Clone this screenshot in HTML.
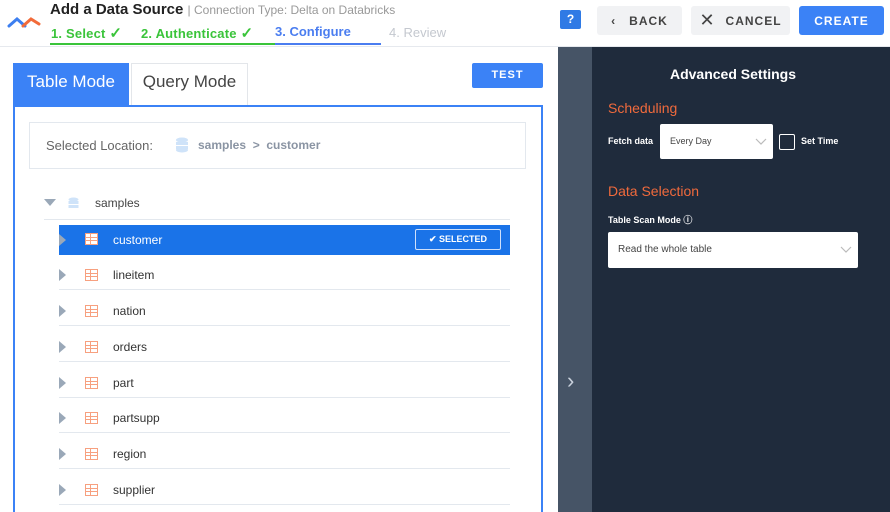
<!DOCTYPE html>
<html><head><style>
*{box-sizing:border-box;margin:0;padding:0}
html,body{width:890px;height:512px;overflow:hidden}
body{background:#fff;font-family:"Liberation Sans",sans-serif;position:relative}
.a{position:absolute}
.btn{position:absolute;top:6px;height:29px;border-radius:3px;font-size:12px;font-weight:bold;letter-spacing:1px;display:flex;align-items:center;justify-content:center}
.row{position:absolute;left:59px;width:451px;height:29px;border-bottom:1px solid #e3e8ee;font-size:12px;color:#333}
.row .tri{position:absolute;left:0;top:8px;width:0;height:0;border-top:6px solid transparent;border-bottom:6px solid transparent;border-left:7px solid #9aa8b8}
.row .ic{position:absolute;left:26px;top:8px;width:13px;height:12px;border:1.5px solid #f7a07f;background:
linear-gradient(#f7a07f,#f7a07f) 0 3px/100% 1px no-repeat,linear-gradient(#f7a07f,#f7a07f) 0 6px/100% 1px no-repeat,linear-gradient(#f7a07f,#f7a07f) 4px 0/1px 100% no-repeat}
.row .t{position:absolute;left:54px;top:7px}
.chev{position:absolute;right:6px;top:50%;margin-top:-4px}
</style></head><body>
<svg class="a" style="left:7px;top:14px" width="34" height="18"><path d="M2 12 L10 5 L18 12" stroke="#3d7ff0" stroke-width="3" fill="none" stroke-linecap="round"/><path d="M16 12 L24 5 L32 10" stroke="#f26b3a" stroke-width="3" fill="none" stroke-linecap="round"/></svg>
<div class="a" style="left:50px;top:1px;font-size:15px;font-weight:bold;color:#222">Add a Data Source <span style="font-weight:normal;font-size:12px;color:#999">| Connection Type: Delta on Databricks</span></div>
<div class="a" style="left:51px;top:24px;font-size:13px;color:#3ac43a;font-weight:bold;letter-spacing:.2px">1. Select <span style="font-size:15px">✓</span></div>
<div class="a" style="left:141px;top:24px;font-size:13px;color:#3ac43a;font-weight:bold;letter-spacing:.2px">2. Authenticate <span style="font-size:15px">✓</span></div>
<div class="a" style="left:275px;top:24px;font-size:13px;color:#4a7df0;font-weight:bold">3. Configure</div>
<div class="a" style="left:389px;top:25px;font-size:13px;color:#c4c8cf">4. Review</div>
<div class="a" style="left:50px;top:43px;width:225px;height:2px;background:#3ac43a"></div>
<div class="a" style="left:275px;top:43px;width:106px;height:2px;background:#4a7df0"></div>
<div class="a" style="left:0;top:46px;width:890px;height:1px;background:#e6e9ee"></div>
<div class="a" style="left:560px;top:10px;width:21px;height:19px;background:#2f7ae5;border-radius:2px;color:#fff;font-size:12px;font-weight:bold;text-align:center;line-height:19px">?</div>
<div class="btn" style="left:597px;width:85px;background:#f1f2f4;color:#444">‹&nbsp;&nbsp; BACK</div>
<div class="btn" style="left:691px;width:99px;background:#f1f2f4;color:#444"><span style="font-size:18px;font-weight:normal;margin-right:10px">✕</span>CANCEL</div>
<div class="btn" style="left:799px;width:85px;background:#3b82f6;color:#fff">CREATE</div>
<div class="a" style="left:13px;top:63px;width:116px;height:43px;background:#3b82f6;color:#fff;font-size:17px;line-height:38px;text-align:center">Table Mode</div>
<div class="a" style="left:131px;top:63px;width:117px;height:43px;border:1px solid #e3e6ea;border-bottom:none;color:#444;font-size:17px;line-height:36px;text-align:center">Query Mode</div>
<div class="a" style="left:472px;top:63px;width:71px;height:25px;background:#3b82f6;color:#fff;border-radius:2px;font-size:11px;font-weight:bold;letter-spacing:1px;text-align:center;line-height:25px">TEST</div>
<div class="a" style="left:13px;top:105px;width:530px;height:407px;border:2px solid #3b82f6;border-bottom:none"></div>
<div class="a" style="left:29px;top:122px;width:497px;height:47px;border:1px solid #e3e8ee;font-size:13px;color:#666">
<span class="a" style="left:16px;top:15px">Selected Location:</span>
<svg class="a" style="left:145px;top:14px" width="14" height="16"><ellipse cx="7" cy="3" rx="6" ry="2.5" fill="#cfe3f9"/><rect x="1" y="5" width="12" height="3" fill="#cfe3f9"/><rect x="1" y="9" width="12" height="3" fill="#cfe3f9"/><ellipse cx="7" cy="13" rx="6" ry="2.5" fill="#cfe3f9"/></svg>
<span class="a" style="left:168px;top:15px;font-size:12px;color:#8a94a3;font-weight:bold">samples &nbsp;&gt;&nbsp; customer</span></div>
<div class="a" style="left:44px;top:199px;width:0;height:0;border-left:6px solid transparent;border-right:6px solid transparent;border-top:7px solid #9aa8b8"></div>
<svg class="a" style="left:68px;top:197px" width="11" height="13"><ellipse cx="5.5" cy="2.5" rx="5" ry="2" fill="#cfe3f9"/><rect x=".5" y="4" width="10" height="3" fill="#cfe3f9"/><rect x=".5" y="8" width="10" height="3" fill="#cfe3f9"/></svg>
<div class="a" style="left:95px;top:196px;font-size:12px;color:#444">samples</div>
<div class="a" style="left:44px;top:219px;width:466px;height:1px;background:#e3e8ee"></div>
<div class="row" style="top:225px;background:#1a73e8;color:#fff;border:none;height:30px"><div class="tri" style="top:9px"></div><div class="ic" style="background-color:#fff;top:8px"></div><div class="t" style="color:#fff;top:8px">customer</div>
<div class="a" style="left:356px;top:4px;width:86px;height:21px;border:1px solid #cfe0fb;border-radius:2px;color:#fff;font-size:9px;font-weight:bold;line-height:19px;text-align:center">✔ SELECTED</div></div>
<div class="row" style="top:261px"><div class="tri"></div><div class="ic"></div><div class="t">lineitem</div></div>
<div class="row" style="top:297px"><div class="tri"></div><div class="ic"></div><div class="t">nation</div></div>
<div class="row" style="top:333px"><div class="tri"></div><div class="ic"></div><div class="t">orders</div></div>
<div class="row" style="top:369px"><div class="tri"></div><div class="ic"></div><div class="t">part</div></div>
<div class="row" style="top:404px"><div class="tri"></div><div class="ic"></div><div class="t">partsupp</div></div>
<div class="row" style="top:440px"><div class="tri"></div><div class="ic"></div><div class="t">region</div></div>
<div class="row" style="top:476px"><div class="tri"></div><div class="ic"></div><div class="t">supplier</div></div>
<div class="a" style="left:558px;top:47px;width:34px;height:465px;background:#465466"></div>
<div class="a" style="left:567px;top:368px;font-size:22px;color:#c9d1dc">›</div>
<div class="a" style="left:592px;top:47px;width:298px;height:465px;background:#1f2b3c"></div>
<div class="a" style="left:592px;top:66px;width:282px;text-align:center;color:#fff;font-size:14px;font-weight:bold">Advanced Settings</div>
<div class="a" style="left:608px;top:100px;color:#f06a3c;font-size:14px">Scheduling</div>
<div class="a" style="left:608px;top:136px;color:#fff;font-size:9px;font-weight:bold">Fetch data</div>
<div class="a" style="left:660px;top:124px;width:113px;height:35px;background:#fff;border-radius:2px;font-size:9px;color:#444;padding:12px 10px">Every Day<svg class="chev" width="12" height="8"><path d="M1 1 L6 6 L11 1" stroke="#bbb" stroke-width="1.2" fill="none"/></svg></div>
<div class="a" style="left:779px;top:134px;width:16px;height:16px;border:1.5px solid #fff;border-radius:2px"></div>
<div class="a" style="left:801px;top:136px;color:#fff;font-size:9px;font-weight:bold">Set Time</div>
<div class="a" style="left:608px;top:183px;color:#f06a3c;font-size:14px">Data Selection</div>
<div class="a" style="left:608px;top:213px;color:#fff;font-size:9px;font-weight:bold">Table Scan Mode ⓘ</div>
<div class="a" style="left:608px;top:232px;width:250px;height:36px;background:#fff;border-radius:2px;font-size:10px;color:#444;padding:12px 10px">Read the whole table<svg class="chev" width="12" height="8"><path d="M1 1 L6 6 L11 1" stroke="#bbb" stroke-width="1.2" fill="none"/></svg></div>
</body></html>
